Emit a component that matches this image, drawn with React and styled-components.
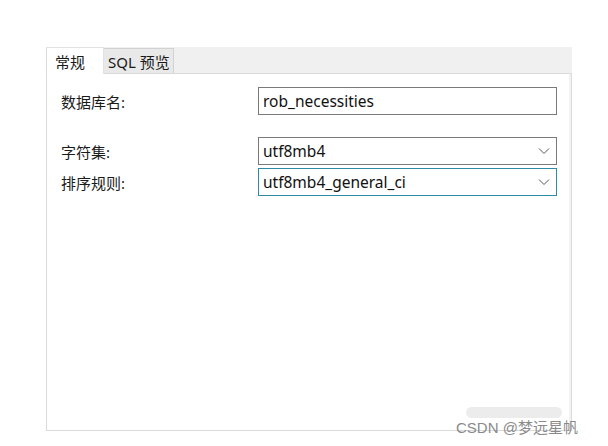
import React from 'react';
import styled, { createGlobalStyle } from 'styled-components';

const GlobalStyle = createGlobalStyle`
  body {
    margin: 0;
    background: #ffffff;
    font-family: "Noto Sans", "Noto Sans CJK SC", sans-serif;
  }
`;

const Page = styled.div`
  width: 608px;
  height: 446px;
  padding: 47px 0 0 46px;
  box-sizing: border-box;
  position: relative;
`;

const Dialog = styled.div`
  width: 526px;
  height: 384px;
  display: flex;
  flex-direction: column;
`;

const TabStrip = styled.div`
  height: 27px;
  display: flex;
  align-items: flex-end;
  background: #f0f0f0;
  border-bottom: 1px solid #dadada;
  box-sizing: border-box;
`;

const Tab = styled.div`
  flex-shrink: 0;
  white-space: nowrap;
  height: ${(p) => (p.active ? '27px' : '25px')};
  margin-bottom: ${(p) => (p.active ? '-1px' : '0')};
  padding-left: ${(p) => (p.active ? '8px' : '4px')};
  box-sizing: border-box;
  display: flex;
  align-items: center;
  font-size: 15px;
  color: #1a1a1a;
  background: ${(p) => (p.active ? '#ffffff' : '#e9e9e9')};
  border-top: 1px solid ${(p) => (p.active ? '#e2e2e2' : '#d2d2d2')};
  border-right: 1px solid ${(p) => (p.active ? '#e2e2e2' : '#d2d2d2')};
  border-left: ${(p) => (p.active ? '1px solid #dcdcdc' : 'none')};
  width: ${(p) => p.w}px;
`;

const Content = styled.div`
  flex: 1;
  border: 1px solid #dadada;
  border-top: none;
  box-shadow: inset -2px 0 0 #f2f2f2;
  padding: 13px 0 0 14px;
  display: grid;
  grid-template-columns: 197px 299px;
  align-content: start;
`;

const Label = styled.div`
  font-size: 15px;
  color: #1a1a1a;
  display: flex;
  align-items: center;
  height: 28px;
  margin-top: ${(p) => p.gap || 0}px;
`;

const Field = styled.div`
  height: 28px;
  box-sizing: border-box;
  margin-top: ${(p) => p.gap || 0}px;
  border: 1px solid ${(p) => (p.focused ? '#2f8aa6' : '#7a7a7a')};
  display: flex;
  align-items: center;
  padding: 0 6px 0 4px;
  font-size: 15.5px;
  color: #111;
  background: #fff;
`;

const Value = styled.span`
  flex: 1;
`;

const Chevron = () => (
  <svg width="12" height="8" viewBox="0 0 12 8">
    <path d="M1 1.5 L6 6.5 L11 1.5" fill="none" stroke="#555" strokeWidth="1" />
  </svg>
);

const Watermark = styled.div`
  position: absolute;
  left: 456px;
  top: 416px;
  font-size: 15px;
  color: #8a8a8a;
  font-family: "Liberation Sans", "Noto Sans CJK SC", sans-serif;
`;

const Smudge = styled.div`
  position: absolute;
  left: 466px;
  top: 407px;
  width: 96px;
  height: 11px;
  border-radius: 6px;
  background: #ececec;
`;

export default function App() {
  return (
    <Page>
      <GlobalStyle />
      <Dialog>
        <TabStrip>
          <Tab active w={58}>常规</Tab>
          <Tab w={70}>SQL 预览</Tab>
        </TabStrip>
        <Content>
          <Label>数据库名:</Label>
          <Field>
            <Value>rob_necessities</Value>
          </Field>
          <Label gap={22}>字符集:</Label>
          <Field gap={22}>
            <Value>utf8mb4</Value>
            <Chevron />
          </Field>
          <Label gap={3}>排序规则:</Label>
          <Field gap={3} focused>
            <Value>utf8mb4_general_ci</Value>
            <Chevron />
          </Field>
        </Content>
      </Dialog>
      <Smudge />
      <Watermark>CSDN @梦远星帆</Watermark>
    </Page>
  );
}
